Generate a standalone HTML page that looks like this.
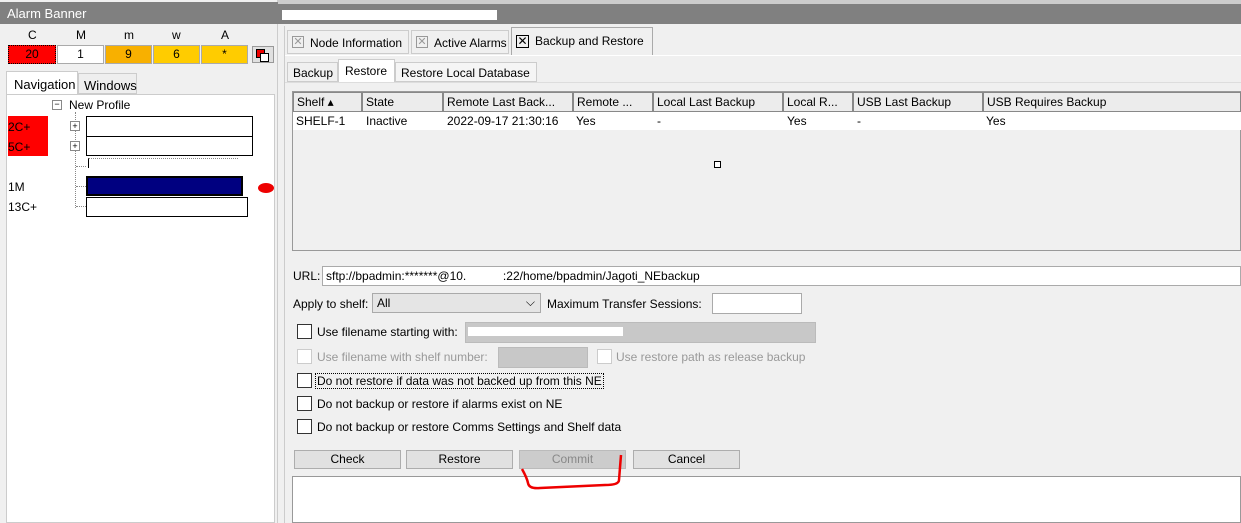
<!DOCTYPE html>
<html><head><style>
*{box-sizing:border-box;margin:0;padding:0}
body{width:1241px;height:523px;background:#f0f0f0;font-family:"Liberation Sans",sans-serif;font-size:12px;color:#000;position:relative;overflow:hidden}
.a{position:absolute}
.tb{background:#808080;color:#fff;font-size:13px}
.cell{position:absolute;text-align:center;font-size:12px;line-height:17px;border:1px solid #aaa}
.th{position:absolute;top:92px;height:20px;background:#ececec;border:1px solid #888;padding-left:3px;line-height:18px;white-space:nowrap;overflow:hidden}
.td{position:absolute;top:113px;line-height:17px}
.cb{position:absolute;width:15px;height:15px;border:1px solid #333;background:#fff}
.btn{position:absolute;top:450px;height:19px;width:107px;background:#e1e1e1;border:1px solid #adadad;text-align:center;line-height:17px}
.blk{position:absolute;background:#fff;border:1px solid #000}
.dh{position:absolute;width:10px;border-top:1px dotted #888}
</style></head><body>
<div class="a" style="left:0;top:0;width:278px;height:523px;background:#f0f0f0;border-right:1px solid #ccc"></div>
<div class="a tb" style="left:0;top:2px;width:278px;height:22px;padding:5px 0 0 7px;line-height:14px">Alarm Banner</div>
<div class="a" style="left:0;top:28px;width:250px;font-size:12px">
<span class="a" style="left:28px">C</span><span class="a" style="left:76px">M</span><span class="a" style="left:124px">m</span><span class="a" style="left:172px">w</span><span class="a" style="left:221px">A</span></div>
<div class="cell" style="left:8px;top:45px;width:48px;height:19px;background:#f00;border:1px dotted #000">20</div>
<div class="cell" style="left:57px;top:45px;width:47px;height:19px;background:#fff">1</div>
<div class="cell" style="left:105px;top:45px;width:47px;height:19px;background:#f8b000">9</div>
<div class="cell" style="left:153px;top:45px;width:47px;height:19px;background:#ffcc00">6</div>
<div class="cell" style="left:201px;top:45px;width:47px;height:19px;background:#ffcc00">*</div>
<div class="a" style="left:252px;top:46px;width:22px;height:17px;background:#e0e0e0;border:1px solid #999"></div>
<div class="a" style="left:256px;top:49px;width:9px;height:9px;background:#e00;border:1px solid #000"></div>
<div class="a" style="left:260px;top:53px;width:9px;height:9px;background:#fff;border:1px solid #000"></div>
<div class="a" style="left:6px;top:71px;width:72px;height:24px;background:#fff;border:1px solid #ccc;border-bottom:none;padding:5px 0 0 7px;font-size:13px">Navigation</div>
<div class="a" style="left:78px;top:73px;width:59px;height:21px;background:#eee;border:1px solid #ccc;padding:4px 0 0 5px;font-size:13px">Windows</div>
<div class="a" style="left:6px;top:94px;width:269px;height:429px;background:#fff;border:1px solid #ccc"></div>
<div class="a" style="left:52px;top:100px;width:10px;height:10px;border:1px solid #888;font-size:9px;line-height:7px;text-align:center">−</div>
<div class="a" style="left:69px;top:98px;font-size:12px">New Profile</div>
<div class="a" style="left:75px;top:112px;height:96px;border-left:1px dotted #888"></div>
<div class="dh" style="left:76px;top:166px"></div><div class="dh" style="left:76px;top:186px"></div><div class="dh" style="left:76px;top:206px"></div>
<div class="a" style="left:8px;top:116px;width:40px;height:40px;background:#f00"></div>
<div class="a" style="left:8px;top:120px">2C+</div><div class="a" style="left:8px;top:140px">5C+</div>
<div class="a" style="left:8px;top:180px">1M</div><div class="a" style="left:8px;top:200px">13C+</div>
<div class="a" style="left:70px;top:121px;width:10px;height:10px;border:1px solid #888;background:#fff;font-size:9px;line-height:8px;text-align:center">+</div>
<div class="a" style="left:70px;top:141px;width:10px;height:10px;border:1px solid #888;background:#fff;font-size:9px;line-height:8px;text-align:center">+</div>
<div class="blk" style="left:86px;top:116px;width:167px;height:21px"></div>
<div class="blk" style="left:86px;top:136px;width:167px;height:20px"></div>
<div class="a" style="left:88px;top:158px;width:150px;height:10px;border-left:1px solid #000;border-top:1px dotted #888"></div>
<div class="blk" style="left:86px;top:176px;width:157px;height:20px;border:2px solid #000;background:#000080"></div>
<div class="blk" style="left:86px;top:197px;width:162px;height:20px"></div>
<div class="a" style="left:258px;top:183px;width:16px;height:10px;background:#e00;border-radius:50%"></div>
<div class="a" style="left:278px;top:0;width:963px;height:4px;background:#ccc"></div>
<div class="a tb" style="left:278px;top:4px;width:963px;height:20px"></div>
<div class="a" style="left:282px;top:10px;width:215px;height:10px;background:#fff"></div>
<div class="a" style="left:284px;top:26px;width:957px;height:497px;border-left:1px solid #ccc;background:#f0f0f0"></div>
<div class="a" style="left:287px;top:30px;width:122px;height:24px;border:1px solid #ccc;padding:5px 0 0 22px;font-size:12px">Node Information</div>
<div class="a" style="left:411px;top:30px;width:98px;height:24px;border:1px solid #ccc;padding:5px 0 0 22px">Active Alarms</div>
<div class="a" style="left:511px;top:27px;width:142px;height:28px;background:#f0f0f0;border:1px solid #aaa;border-bottom:none;padding:6px 0 0 23px">Backup and Restore</div>
<div class="a" style="left:292px;top:36px;width:12px;height:12px;border:1px solid #999;color:#999;font-size:11px;line-height:10px;text-align:center">✕</div>
<div class="a" style="left:416px;top:36px;width:12px;height:12px;border:1px solid #999;color:#999;font-size:11px;line-height:10px;text-align:center">✕</div>
<div class="a" style="left:516px;top:35px;width:13px;height:13px;border:1px solid #000;font-size:12px;line-height:11px;text-align:center">✕</div>
<div class="a" style="left:285px;top:55px;width:956px;border-top:1px solid #fff"></div>
<div class="a" style="left:287px;top:62px;width:51px;height:20px;border:1px solid #ccc;padding:3px 0 0 5px">Backup</div>
<div class="a" style="left:338px;top:59px;width:57px;height:24px;background:#fff;border:1px solid #ccc;border-bottom:none;padding:4px 0 0 6px">Restore</div>
<div class="a" style="left:395px;top:62px;width:142px;height:20px;background:#f5f5f5;border:1px solid #ccc;padding:3px 0 0 5px">Restore Local Database</div>
<div class="a" style="left:285px;top:82px;width:956px;height:441px;background:#f0f0f0;border-top:1px solid #ddd"></div>
<div class="a" style="left:292px;top:91px;width:949px;height:160px;background:#f0f0f0;border:1px solid #999"></div>
<div class="th" style="left:293px;width:69px">Shelf ▴</div>
<div class="th" style="left:362px;width:81px">State</div>
<div class="th" style="left:443px;width:130px">Remote Last Back...</div>
<div class="th" style="left:573px;width:80px">Remote ...</div>
<div class="th" style="left:653px;width:130px">Local Last Backup</div>
<div class="th" style="left:783px;width:70px">Local R...</div>
<div class="th" style="left:853px;width:130px">USB Last Backup</div>
<div class="th" style="left:983px;width:258px">USB Requires Backup</div>
<div class="a" style="left:293px;top:112px;width:948px;height:18px;background:#fff"></div>
<div class="td" style="left:296px">SHELF-1</div><div class="td" style="left:366px">Inactive</div>
<div class="td" style="left:447px">2022-09-17 21:30:16</div><div class="td" style="left:576px">Yes</div>
<div class="td" style="left:657px">-</div><div class="td" style="left:787px">Yes</div>
<div class="td" style="left:857px">-</div><div class="td" style="left:986px">Yes</div>
<div class="a" style="left:714px;top:161px;width:7px;height:7px;border:1px solid #000;background:#fff"></div>
<div class="a" style="left:293px;top:269px">URL:</div>
<div class="a" style="left:322px;top:266px;width:919px;height:20px;background:#fff;border:1px solid #aaa;padding:2px 3px;white-space:nowrap">sftp://bpadmin:*******@10.&nbsp;&nbsp;&nbsp;&nbsp;&nbsp;&nbsp;&nbsp;&nbsp;&nbsp;&nbsp;&nbsp;:22/home/bpadmin/Jagoti_NEbackup</div>
<div class="a" style="left:293px;top:297px">Apply to shelf:</div>
<div class="a" style="left:372px;top:293px;width:169px;height:20px;background:#e5e5e5;border:1px solid #aaa;padding:2px 4px">All<span class="a" style="right:5px;top:1px">⌵</span></div>
<div class="a" style="left:547px;top:297px">Maximum Transfer Sessions:</div>
<div class="a" style="left:712px;top:293px;width:90px;height:21px;background:#fff;border:1px solid #aaa"></div>
<div class="cb" style="left:297px;top:324px"></div><div class="a" style="left:317px;top:325px">Use filename starting with:</div>
<div class="a" style="left:465px;top:322px;width:351px;height:21px;background:#c8c8c8;border:1px solid #bbb"></div>
<div class="a" style="left:468px;top:327px;width:155px;height:9px;background:#fff"></div>
<div class="cb" style="left:297px;top:349px;border-color:#ccc"></div><div class="a" style="left:317px;top:350px;color:#999">Use filename with shelf number:</div>
<div class="a" style="left:498px;top:347px;width:90px;height:21px;background:#c8c8c8;border:1px solid #bbb"></div>
<div class="cb" style="left:597px;top:349px;border-color:#ccc"></div><div class="a" style="left:616px;top:350px;color:#999">Use restore path as release backup</div>
<div class="cb" style="left:297px;top:373px"></div><div class="a" style="left:315px;top:373px;border:1px dotted #000;padding:0 1px">Do not restore if data was not backed up from this NE</div>
<div class="cb" style="left:297px;top:396px"></div><div class="a" style="left:317px;top:397px">Do not backup or restore if alarms exist on NE</div>
<div class="cb" style="left:297px;top:419px"></div><div class="a" style="left:317px;top:420px">Do not backup or restore Comms Settings and Shelf data</div>
<div class="btn" style="left:294px">Check</div>
<div class="btn" style="left:406px">Restore</div>
<div class="btn" style="left:519px;background:#ccc;color:#888;border-color:#bbb">Commit</div>
<div class="btn" style="left:633px">Cancel</div>
<div class="a" style="left:292px;top:476px;width:949px;height:47px;background:#fff;border:1px solid #999"></div>
<svg class="a" style="left:515px;top:450px" width="115" height="45"><path d="M7 19 Q12 28 13 33 Q14 39 25 38 L90 35 Q104 35 104 30 L106 5" stroke="#e00" stroke-width="2.5" fill="none"/></svg>
</body></html>
